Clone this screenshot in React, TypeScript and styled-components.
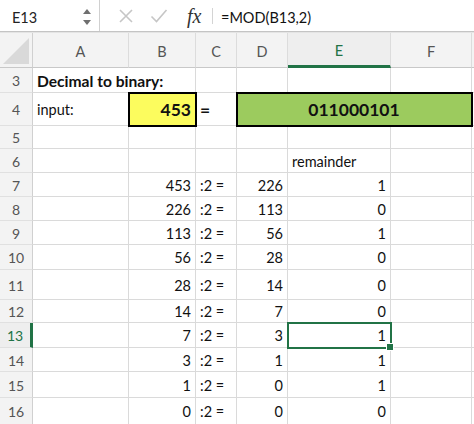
import styled, { createGlobalStyle } from "styled-components";

const GlobalStyle = createGlobalStyle`
  html, body {
    margin: 0;
    padding: 0;
    background: #fff;
  }
  body {
    font-family: Lato, "Open Sans", sans-serif;
    overflow: hidden;
  }
`;

const COLS = [33, 96, 67, 41, 51, 103, 81];
const ROW_HEIGHTS = [25, 33, 23, 24, 24, 24, 24, 25, 30, 23, 25, 24, 26, 27];
const LETTERS = ["A", "B", "C", "D", "E", "F", ""];

const steps = [
  [453, 226, 1],
  [226, 113, 0],
  [113, 56, 1],
  [56, 28, 0],
  [28, 14, 0],
  [14, 7, 0],
  [7, 3, 1],
  [3, 1, 1],
  [1, 0, 1],
  [0, 0, 0],
];

const SELECTED_ROW = 13;
const SELECTED_COL = "E";

const App = () => {
  return (
    <>
      <GlobalStyle />
      <Page>
        <FormulaBar>
          <NameBox>
            <span>E13</span>
            <svg width="10" height="18" viewBox="0 0 10 18">
              <path d="M5 1 L9 6 L1 6 Z" fill="#6f6f6f" />
              <path d="M1 12 L9 12 L5 17 Z" fill="#6f6f6f" />
            </svg>
          </NameBox>
          <Tools>
            <svg width="16" height="16" viewBox="0 0 16 16">
              <path d="M2 2 L14 14 M14 2 L2 14" stroke="#c6c6c6" strokeWidth="1.6" fill="none" />
            </svg>
            <svg width="18" height="16" viewBox="0 0 18 16">
              <path d="M1.5 8.5 L6.5 13.5 L16.5 2" stroke="#c6c6c6" strokeWidth="1.6" fill="none" />
            </svg>
            <Fx>fx</Fx>
          </Tools>
          <Divider />
          <FormulaText>=MOD(B13,2)</FormulaText>
        </FormulaBar>

        <Sheet>
          <Corner>
            <svg width="28" height="30" viewBox="0 0 28 30">
              <path d="M27 3 L27 29 L1 29 Z" fill="#d9d9d9" />
            </svg>
          </Corner>
          {LETTERS.map((l) => (
            <ColHeader key={l || "g"} $selected={l === SELECTED_COL} $last={l === ""}>
              {l}
            </ColHeader>
          ))}

          {/* row 3 */}
          <RowHeader>3</RowHeader>
          <Cell $span={2} $bold $size={15.6}>
            Decimal to binary:
          </Cell>
          <Cell />
          <Cell />
          <Cell />
          <Cell />
          <Cell $last />

          {/* row 4 */}
          <RowHeader>4</RowHeader>
          <Cell>input:</Cell>
          <Cell $align="right" $bold $size={17.5} $fill="#fcfc5e" $outline="#000">
            453
          </Cell>
          <Cell $bold $size={17.5}>
            =
          </Cell>
          <Cell $span={3} $align="center" $bold $size={17.5} $fill="#9ccb5e" $outline="#000">
            011000101
          </Cell>
          <Cell $last />

          {/* row 5 */}
          <RowHeader>5</RowHeader>
          {LETTERS.map((l) => (
            <Cell key={l || "g"} $last={l === ""} />
          ))}

          {/* row 6 */}
          <RowHeader>6</RowHeader>
          <Cell />
          <Cell />
          <Cell />
          <Cell />
          <Cell>remainder</Cell>
          <Cell />
          <Cell $last />

          {steps.map(([n, q, r], i) => {
            const row = i + 7;
            const selected = row === SELECTED_ROW;
            return [
              <RowHeader key={`h${row}`} $selected={selected}>
                {row}
              </RowHeader>,
              <Cell key={`a${row}`} />,
              <Cell key={`b${row}`} $align="right">
                {n}
              </Cell>,
              <Cell key={`c${row}`}>:2 =</Cell>,
              <Cell key={`d${row}`} $align="right">
                {q}
              </Cell>,
              <Cell key={`e${row}`} $align="right" $outline={selected ? "#217346" : undefined}>
                {r}
                {selected && <FillHandle />}
              </Cell>,
              <Cell key={`f${row}`} />,
              <Cell key={`g${row}`} $last />,
            ];
          })}
        </Sheet>
      </Page>
    </>
  );
};

export default App;

/*
Styles
*/

const Page = styled.div`
  width: 474px;
  height: 424px;
  overflow: hidden;
  background: #fff;
`;

const FormulaBar = styled.div`
  display: flex;
  align-items: stretch;
  height: 31px;
  border-bottom: 1px solid #c4c4c4;
  background: #fff;
`;

const NameBox = styled.div`
  width: 100px;
  box-sizing: border-box;
  display: flex;
  align-items: center;
  justify-content: space-between;
  padding: 3px 7px 0 12px;
  border-right: 1px solid #d0d0d0;
  font-size: 14.5px;
  color: #222;
`;

const Tools = styled.div`
  display: flex;
  align-items: center;
  gap: 16px;
  padding: 1px 0 0 18px;
  width: 112px;
  box-sizing: border-box;
`;

const Fx = styled.span`
  font-family: "Liberation Serif", "DejaVu Serif", serif;
  font-style: italic;
  font-size: 20px;
  color: #333;
  margin-left: 3px;
`;

const Divider = styled.div`
  width: 1px;
  background: #d4d4d4;
  margin: 8px 0 7px;
`;

const FormulaText = styled.div`
  display: flex;
  align-items: center;
  padding: 3px 0 0 8px;
  font-size: 14.5px;
  color: #111;
  white-space: nowrap;
`;

const Sheet = styled.div`
  display: grid;
  grid-template-columns: ${COLS.map((c) => `${c}px`).join(" ")} 1fr;
  grid-template-rows: 35px ${ROW_HEIGHTS.map((h) => `${h}px`).join(" ")};
  border-top: 1px solid #e4e4e4;
`;

const Corner = styled.div`
  background: #f3f3f3;
  border-right: 1px solid #d0d0d0;
  border-bottom: 1px solid #c8c8c8;
  display: flex;
  align-items: flex-end;
  justify-content: flex-end;
  padding: 0 2px 2px 0;
  box-sizing: border-box;
`;

const ColHeader = styled.div<{ $selected?: boolean; $last?: boolean }>`
  display: flex;
  align-items: center;
  justify-content: center;
  padding-top: 2px;
  box-sizing: border-box;
  background: ${(p) => (p.$selected ? "#eeeeee" : "#f3f3f3")};
  border-right: ${(p) => (p.$last ? "none" : "1px solid #dcdcdc")};
  border-bottom: ${(p) => (p.$selected ? "3px solid #217346" : "1px solid #c8c8c8")};
  color: ${(p) => (p.$selected ? "#217346" : "#555")};
  font-size: 14.5px;
`;

const RowHeader = styled.div<{ $selected?: boolean }>`
  display: flex;
  align-items: center;
  justify-content: center;
  box-sizing: border-box;
  background: ${(p) => (p.$selected ? "#eeeeee" : "#f3f3f3")};
  border-right: ${(p) => (p.$selected ? "3px solid #217346" : "1px solid #d0d0d0")};
  border-bottom: 1px solid #e0e0e0;
  color: ${(p) => (p.$selected ? "#217346" : "#555")};
  font-size: 14px;
  padding-top: 1px;
`;

const Cell = styled.div<{
  $align?: "left" | "right" | "center";
  $bold?: boolean;
  $size?: number;
  $fill?: string;
  $outline?: string;
  $span?: number;
  $last?: boolean;
}>`
  position: ${(p) => (p.$outline ? "relative" : "static")};
  z-index: ${(p) => (p.$outline ? 1 : "auto")};
  grid-column: ${(p) => (p.$span ? `span ${p.$span}` : "auto")};
  display: flex;
  align-items: center;
  justify-content: ${(p) =>
    p.$align === "right" ? "flex-end" : p.$align === "center" ? "center" : "flex-start"};
  box-sizing: border-box;
  padding: 1px 4px 0 4px;
  min-width: 0;
  white-space: nowrap;
  background: ${(p) => p.$fill || "#fff"};
  border-right: ${(p) => (p.$last ? "none" : "1px solid #dadada")};
  border-bottom: 1px solid #dadada;
  outline: ${(p) => (p.$outline ? `2px solid ${p.$outline}` : "none")};
  outline-offset: -1px;
  font-weight: ${(p) => (p.$bold ? 700 : 400)};
  font-size: ${(p) => p.$size || 14.5}px;
  color: #111;
`;

const FillHandle = styled.span`
  position: absolute;
  right: -4px;
  bottom: -4px;
  width: 6px;
  height: 6px;
  background: #217346;
  border: 1px solid #fff;
`;
